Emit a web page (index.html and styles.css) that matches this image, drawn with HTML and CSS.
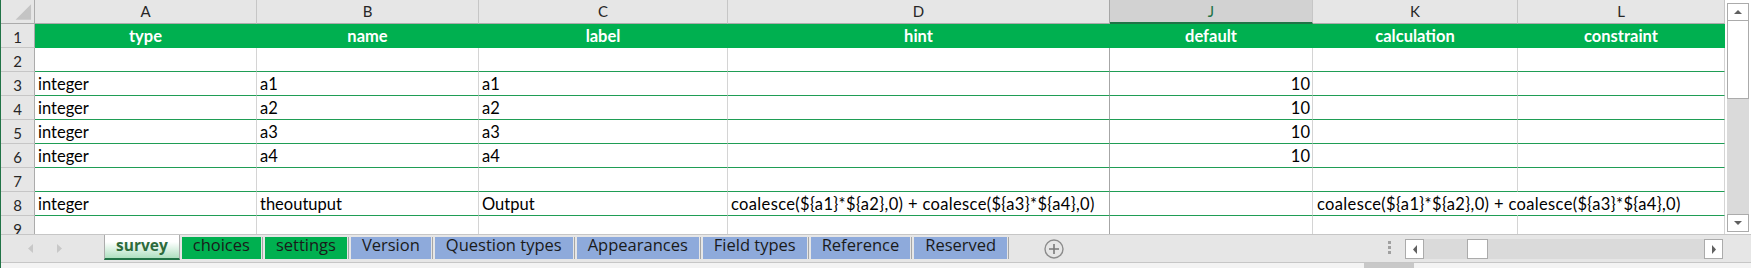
FILE: index.html
```html
<!DOCTYPE html>
<html lang="en">
<head>
  <meta charset="UTF-8" />
  <title>survey - Excel</title>
  <link rel="stylesheet" href="styles.css">
</head>
<body>
  <div class="app">
    <div class="main">
      <div class="grid">
        <!-- column headers -->
        <div class="cell corner">
          <svg width="34" height="23" viewBox="0 0 34 23"><polygon points="31,4 31,20 15,20" fill="#c4c4c4"/></svg>
        </div>
        <div class="cell ch">A</div>
        <div class="cell ch">B</div>
        <div class="cell ch">C</div>
        <div class="cell ch split">D</div>
        <div class="cell ch sel">J</div>
        <div class="cell ch">K</div>
        <div class="cell ch">L</div>

        <!-- row 1 -->
        <div class="cell rh">1</div>
        <div class="cell hd">type</div>
        <div class="cell hd">name</div>
        <div class="cell hd">label</div>
        <div class="cell hd">hint</div>
        <div class="cell hd">default</div>
        <div class="cell hd">calculation</div>
        <div class="cell hd">constraint</div>

        <!-- row 2 -->
        <div class="cell rh">2</div>
        <div class="cell g"></div>
        <div class="cell g"></div>
        <div class="cell g"></div>
        <div class="cell g split"></div>
        <div class="cell g"></div>
        <div class="cell g"></div>
        <div class="cell g"></div>

        <!-- row 3 -->
        <div class="cell rh">3</div>
        <div class="cell g">integer</div>
        <div class="cell g">a1</div>
        <div class="cell g">a1</div>
        <div class="cell g split"></div>
        <div class="cell g num">10</div>
        <div class="cell g"></div>
        <div class="cell g"></div>

        <!-- row 4 -->
        <div class="cell rh">4</div>
        <div class="cell g">integer</div>
        <div class="cell g">a2</div>
        <div class="cell g">a2</div>
        <div class="cell g split"></div>
        <div class="cell g num">10</div>
        <div class="cell g"></div>
        <div class="cell g"></div>

        <!-- row 5 -->
        <div class="cell rh">5</div>
        <div class="cell g">integer</div>
        <div class="cell g">a3</div>
        <div class="cell g">a3</div>
        <div class="cell g split"></div>
        <div class="cell g num">10</div>
        <div class="cell g"></div>
        <div class="cell g"></div>

        <!-- row 6 -->
        <div class="cell rh">6</div>
        <div class="cell g">integer</div>
        <div class="cell g">a4</div>
        <div class="cell g">a4</div>
        <div class="cell g split"></div>
        <div class="cell g num">10</div>
        <div class="cell g"></div>
        <div class="cell g"></div>

        <!-- row 7 -->
        <div class="cell rh">7</div>
        <div class="cell g"></div>
        <div class="cell g"></div>
        <div class="cell g"></div>
        <div class="cell g split"></div>
        <div class="cell g"></div>
        <div class="cell g"></div>
        <div class="cell g"></div>

        <!-- row 8 -->
        <div class="cell rh">8</div>
        <div class="cell g">integer</div>
        <div class="cell g">theoutuput</div>
        <div class="cell g">Output</div>
        <div class="cell g split formula">coalesce(${a1}*${a2},0) + coalesce(${a3}*${a4},0)</div>
        <div class="cell g"></div>
        <div class="cell g spill formula">coalesce(${a1}*${a2},0) + coalesce(${a3}*${a4},0)</div>
        <div class="cell g"></div>

        <!-- row 9 -->
        <div class="cell rh">9</div>
        <div class="cell"></div>
        <div class="cell"></div>
        <div class="cell"></div>
        <div class="cell split"></div>
        <div class="cell"></div>
        <div class="cell"></div>
        <div class="cell"></div>
      </div>

      <div class="vscroll">
        <div class="sb-btn">
          <svg width="9" height="6" viewBox="0 0 9 6"><polygon points="0,5 8,5 4,1" fill="#606060"/></svg>
        </div>
        <div class="v-thumb"></div>
        <div class="v-track"></div>
        <div class="sb-btn">
          <svg width="9" height="6" viewBox="0 0 9 6"><polygon points="0,1 8,1 4,5" fill="#606060"/></svg>
        </div>
      </div>
    </div>

    <div class="tabbar">
      <div class="tab-nav">
        <svg width="6" height="9" viewBox="0 0 6 9"><polygon points="5,0 5,9 0,4.5" fill="#c8c8c8"/></svg>
        <svg width="6" height="9" viewBox="0 0 6 9"><polygon points="0,0 0,9 5,4.5" fill="#c8c8c8"/></svg>
      </div>
      <div class="tabs">
        <div class="tab active">survey</div>
        <div class="tab green">choices</div>
        <span class="tab-sep"></span>
        <div class="tab green">settings</div>
        <span class="tab-sep"></span>
        <div class="tab blue">Version</div>
        <span class="tab-sep"></span>
        <div class="tab blue">Question types</div>
        <span class="tab-sep"></span>
        <div class="tab blue">Appearances</div>
        <span class="tab-sep"></span>
        <div class="tab blue">Field types</div>
        <span class="tab-sep"></span>
        <div class="tab blue">Reference</div>
        <span class="tab-sep"></span>
        <div class="tab blue">Reserved</div>
        <span class="tab-sep"></span>
      </div>
      <div class="add-sheet">
        <svg width="20" height="20" viewBox="0 0 20 20">
          <circle cx="10" cy="10" r="9" fill="none" stroke="#8c8c8c" stroke-width="1.4"/>
          <path d="M10 5v10M5 10h10" stroke="#7a7a7a" stroke-width="1.6"/>
        </svg>
      </div>
      <div class="splitter">
        <span></span><span></span><span></span>
      </div>
      <div class="hscroll">
        <div class="sb-btn">
          <svg width="6" height="9" viewBox="0 0 6 9"><polygon points="5,0 5,9 1,4.5" fill="#606060"/></svg>
        </div>
        <div class="h-track"><div class="h-thumb"></div></div>
        <div class="sb-btn">
          <svg width="6" height="9" viewBox="0 0 6 9"><polygon points="1,0 1,9 5,4.5" fill="#606060"/></svg>
        </div>
      </div>
    </div>

    <div class="status">
      <span class="status-grip"></span>
    </div>
  </div>
</body>
</html>
```

FILE: styles.css
```css
* {
  box-sizing: border-box;
  margin: 0;
  padding: 0;
}

body {
  background-color: #fff;
  font-family: "Lato", "Carlito", sans-serif;
}

.app {
  width: 1751px;
  height: 268px;
  border-left: 1px solid #217346;
  display: flex;
  flex-direction: column;
  overflow: hidden;
  background-color: #fff;
}

.main {
  display: flex;
  height: 234px;
  overflow: hidden;
}

/* sheet grid */

.grid {
  display: grid;
  grid-template-columns: 34px 222px 222px 249px 382px 203px 205px 207px;
  grid-auto-rows: 24px;
}

.cell {
  border-right: 1px solid #d4d4d4;
  border-bottom: 1px solid #d4d4d4;
  display: flex;
  align-items: flex-end;
  padding: 0 3px 1px;
  font-size: 16.5px;
  line-height: 20px;
  white-space: nowrap;
  color: #000;
}

.corner {
  background-color: #e6e6e6;
  border-right-color: #ababab;
  border-bottom-color: #ababab;
  padding: 0;
}

.ch {
  background-color: #e6e6e6;
  border-right-color: #c6c6c6;
  border-bottom-color: #ababab;
  justify-content: center;
  align-items: center;
  font-size: 15px;
  color: #262626;
}

.ch.sel {
  background-color: #d2d2d2;
  border-bottom: 2px solid #217346;
  color: #217346;
}

.rh {
  background-color: #e6e6e6;
  border-right-color: #ababab;
  border-bottom-color: #c6c6c6;
  justify-content: center;
  padding-bottom: 0;
  font-size: 15px;
  color: #262626;
}

.g {
  border-bottom-color: #1f9d55;
}

.split {
  border-right-color: #a6a6a6;
}

.hd {
  background-color: #00b050;
  border-color: #00b050;
  color: #fff;
  font-weight: 700;
  justify-content: center;
}

.num {
  justify-content: flex-end;
  padding-right: 2px;
}

.formula {
  letter-spacing: 0.35px;
}

.spill {
  border-right-color: #fff;
  overflow: visible;
  padding-left: 4px;
}

/* vertical scrollbar */

.vscroll {
  width: 26px;
  padding: 3px 2px 2px 2px;
  display: flex;
  flex-direction: column;
  background-color: #fff;
}

.vscroll .sb-btn {
  height: 18px;
}

.sb-btn {
  width: 100%;
  background-color: #fff;
  border: 1px solid #ababab;
  display: flex;
  align-items: center;
  justify-content: center;
}

.v-thumb {
  height: 78px;
  background-color: #fff;
  border: 1px solid #ababab;
  border-top: none;
}

.v-track {
  flex: 1;
  background-color: #dadada;
}

/* sheet tabs */

.tabbar {
  height: 29px;
  border-top: 1px solid #c6c6c6;
  border-bottom: 1px solid #c6c6c6;
  background-color: #e6e6e6;
  display: flex;
  align-items: flex-start;
}

.tab-nav {
  width: 103px;
  height: 27px;
  display: flex;
  align-items: center;
  gap: 23px;
  padding-left: 27px;
}

.tabs {
  display: flex;
  align-items: flex-start;
}

.tab {
  height: 22px;
  margin-top: 2px;
  padding: 0 11px;
  font-family: "Open Sans", "Noto Sans", sans-serif;
  font-size: 16.5px;
  line-height: 16px;
  color: #1a1a1a;
  white-space: nowrap;
}

.tab.active {
  height: 25px;
  margin: 0 2px 0 0;
  padding: 2px 11px 0;
  background-image: linear-gradient(#ffffff, #ffffff 30%, #aee0c0);
  border-left: 1px solid #ababab;
  border-right: 1px solid #ababab;
  border-bottom: 2px solid #217346;
  font-size: 15.5px;
  font-weight: 700;
  color: #2d6b3c;
}

.tab.green {
  background-color: #00b050;
}

.tab.blue {
  background-color: #8eaadb;
}

.tab-sep {
  width: 1px;
  height: 22px;
  margin: 2px 2px 0 1px;
  background-color: #a6a6a6;
}

.add-sheet {
  margin: 4px 0 0 33px;
  display: flex;
}

.splitter {
  margin: 6px 14px 0 auto;
  display: flex;
  flex-direction: column;
  gap: 2px;
}

.splitter span {
  width: 3px;
  height: 3px;
  background-color: #a0a0a0;
}

.hscroll {
  width: 318px;
  height: 20px;
  margin: 4px 28px 0 0;
  display: flex;
}

.hscroll .sb-btn {
  width: 19px;
}

.h-track {
  flex: 1;
  background-color: #dadada;
  display: flex;
}

.h-thumb {
  width: 21px;
  margin-left: 43px;
  background-color: #fff;
  border: 1px solid #ababab;
}

/* bottom strip */

.status {
  height: 5px;
  background-color: #f3f3f3;
  display: flex;
}

.status-grip {
  width: 50px;
  margin-left: 1363px;
  background-color: #c8c8c8;
}
```
